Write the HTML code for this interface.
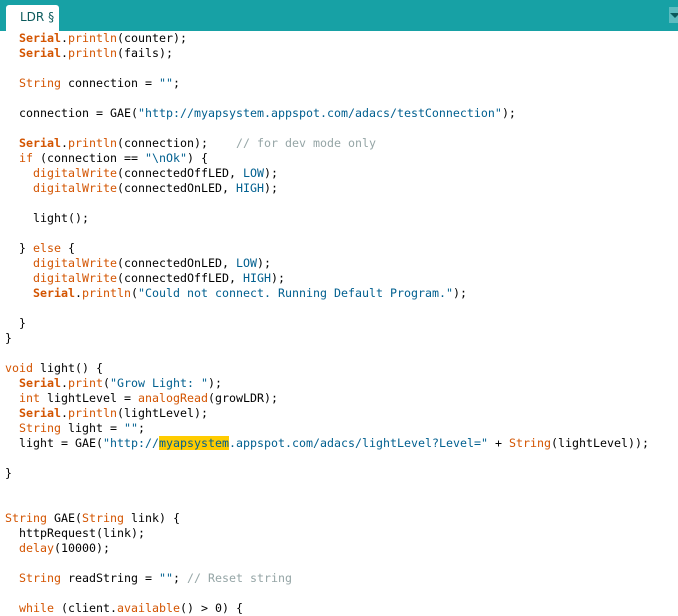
<!DOCTYPE html>
<html><head><style>
body{margin:0;width:678px;height:616px;overflow:hidden;background:#fff;position:relative}
.bar{position:absolute;left:0;top:0;width:678px;height:31px;background:#17a1a5}
.tab{position:absolute;left:6px;top:5px;width:53px;height:26px;background:#fff;border-radius:3px 3px 0 0;font:12px "DejaVu Sans",sans-serif;color:#0b5a5c;line-height:25px;text-indent:14px}
.dd{position:absolute;left:669px;top:7px;width:9px;height:16px;background:#5cbcc0}
.dd:after{content:"";position:absolute;left:1px;top:6px;border-left:5px solid transparent;border-right:5px solid transparent;border-top:5px solid #0b5a5c}
pre{position:absolute;left:5px;top:31px;margin:0;font:11.63px "DejaVu Sans Mono",monospace;line-height:15px;color:#000}
.k{color:#d35400;font-weight:bold}.f{color:#d35400}.s{color:#005f8f}.c{color:#95a5a6}
.h{background:#ffcc00}
</style></head><body>
<div class="bar"></div><div class="tab">LDR §</div><div class="dd"></div>
<pre>  <span class="k">Serial</span>.<span class="f">println</span>(counter);
  <span class="k">Serial</span>.<span class="f">println</span>(fails);

  <span class="f">String</span> connection = <span class="s">""</span>;

  connection = GAE(<span class="s">"http://myapsystem.appspot.com/adacs/testConnection"</span>);

  <span class="k">Serial</span>.<span class="f">println</span>(connection);    <span class="c">// for dev mode only</span>
  <span class="f">if</span> (connection == <span class="s">"\nOk"</span>) {
    <span class="f">digitalWrite</span>(connectedOffLED, <span class="s">LOW</span>);
    <span class="f">digitalWrite</span>(connectedOnLED, <span class="s">HIGH</span>);

    light();

  } <span class="f">else</span> {
    <span class="f">digitalWrite</span>(connectedOnLED, <span class="s">LOW</span>);
    <span class="f">digitalWrite</span>(connectedOffLED, <span class="s">HIGH</span>);
    <span class="k">Serial</span>.<span class="f">println</span>(<span class="s">"Could not connect. Running Default Program."</span>);

  }
}

<span class="f">void</span> light() {
  <span class="k">Serial</span>.<span class="f">print</span>(<span class="s">"Grow Light: "</span>);
  <span class="f">int</span> lightLevel = <span class="f">analogRead</span>(growLDR);
  <span class="k">Serial</span>.<span class="f">println</span>(lightLevel);
  <span class="f">String</span> light = <span class="s">""</span>;
  light = GAE(<span class="s">"http://<span class="h">myapsystem</span>.appspot.com/adacs/lightLevel?Level="</span> + <span class="f">String</span>(lightLevel));

}


<span class="f">String</span> GAE(<span class="f">String</span> link) {
  httpRequest(link);
  <span class="f">delay</span>(10000);

  <span class="f">String</span> readString = <span class="s">""</span>; <span class="c">// Reset string</span>

  <span class="f">while</span> (client.<span class="f">available</span>() &gt; 0) {
</pre>
</body></html>
